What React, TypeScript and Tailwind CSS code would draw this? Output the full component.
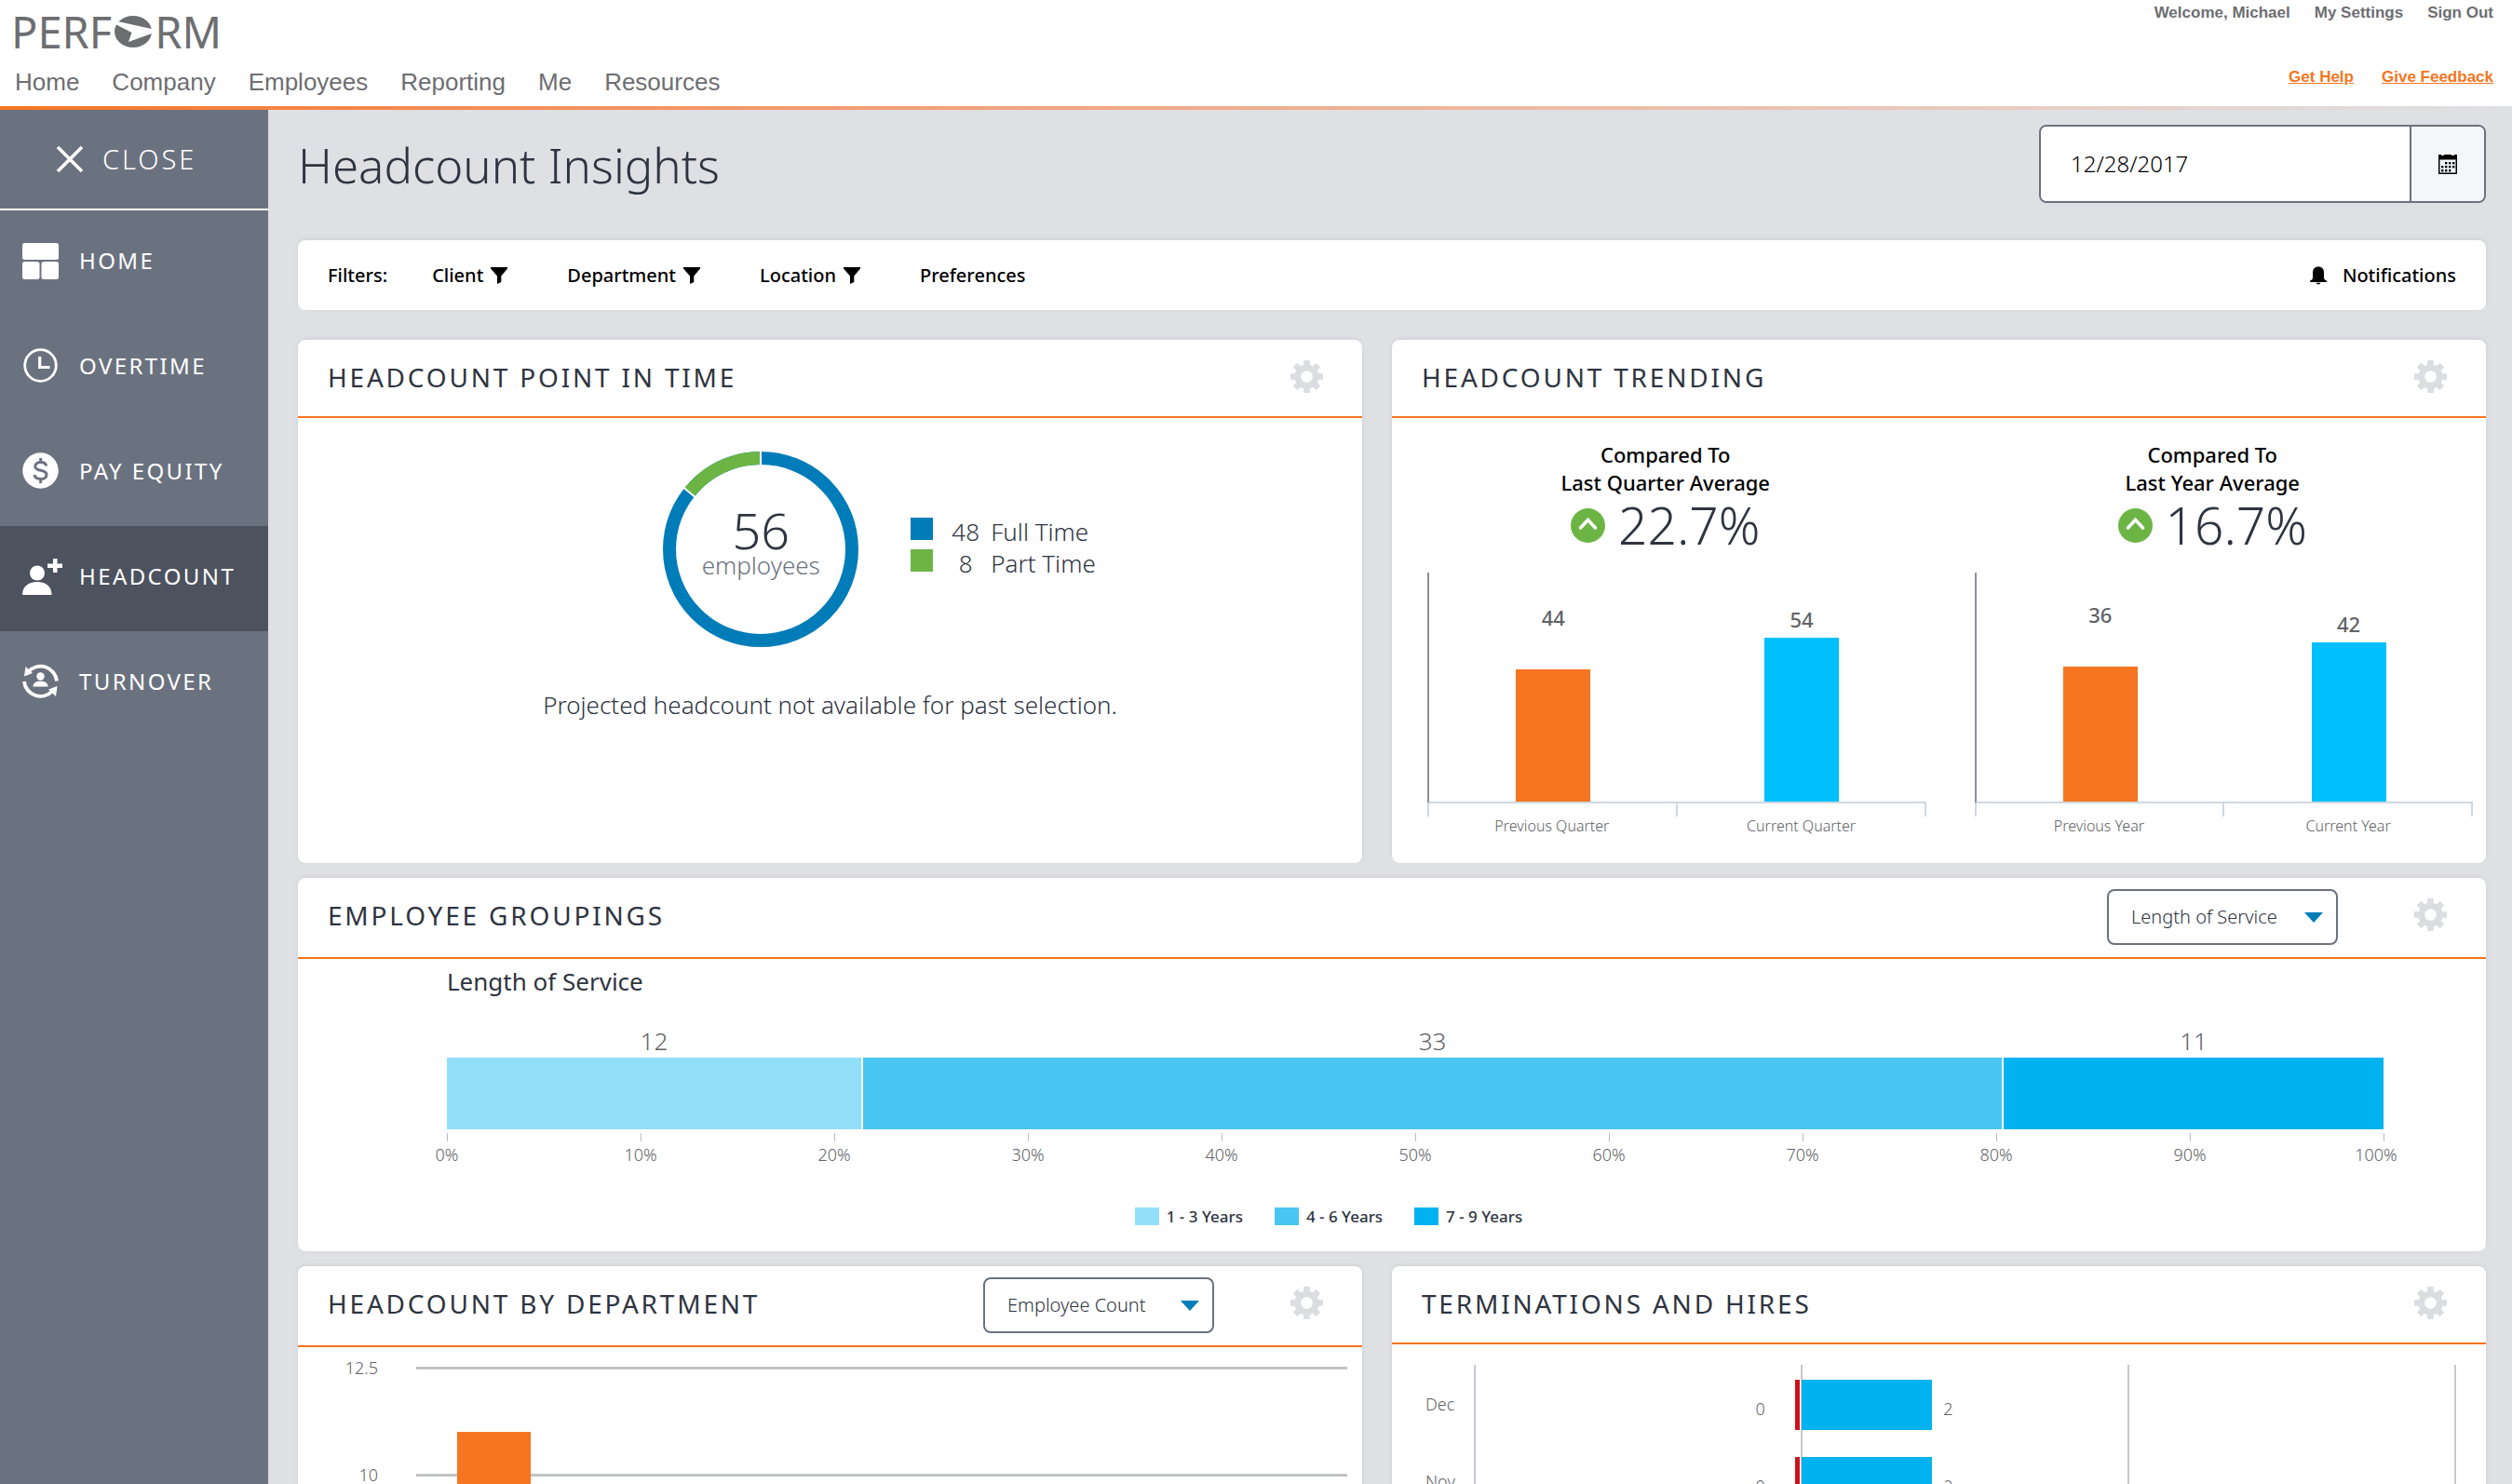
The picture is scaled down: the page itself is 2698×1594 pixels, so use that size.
import React from 'react';

const navLinks = ['Home', 'Company', 'Employees', 'Reporting', 'Me', 'Resources'];

const filters = ['Client', 'Department', 'Location'];

const quarterBars = [
  { label: 'Previous Quarter', value: 44, height: 142, color: 'bg-[#f57520]', gap: 'mb-10' },
  { label: 'Current Quarter', value: 54, height: 176, color: 'bg-[#00bfff]', gap: 'mb-1' },
];

const yearBars = [
  { label: 'Previous Year', value: 36, height: 145, color: 'bg-[#f57520]', gap: 'mb-10' },
  { label: 'Current Year', value: 42, height: 171, color: 'bg-[#00bfff]', gap: 'mb-1' },
];

const serviceGroups = [
  { label: '1 - 3 Years', value: 12, color: 'bg-[#93dff9]' },
  { label: '4 - 6 Years', value: 33, color: 'bg-[#4ac6f3]' },
  { label: '7 - 9 Years', value: 11, color: 'bg-[#00b2f0]' },
];

const percentTicks = [0, 10, 20, 30, 40, 50, 60, 70, 80, 90, 100];

const months = [
  { label: 'Dec', terminations: 0, hires: 2 },
  { label: 'Nov', terminations: 0, hires: 2 },
];

type BarDatum = (typeof quarterBars)[number];

const GearIcon = () => (
  <svg className="h-[35px] w-[35px]" viewBox="0 0 36 36" fill="#dcdde0">
    {[0, 45, 90, 135, 180, 225, 270, 315].map((angle) => (
      <rect key={angle} x="14.6" y="0" width="6.8" height="9" transform={`rotate(${angle} 18 18)`} />
    ))}
    <circle cx="18" cy="18" r="10" fill="none" stroke="#dcdde0" strokeWidth="7" />
  </svg>
);

const FunnelIcon = () => (
  <svg className="h-[18px] w-[18px]" viewBox="0 0 18 18" fill="#000">
    <path d="M0 0h18v1.5L11.3 9.5V16L7 18V9.5L0 1.5z" />
  </svg>
);

const BellIcon = () => (
  <svg className="h-5 w-5" viewBox="0 0 20 20" fill="#000">
    <path d="M10 0.5c4 0 6 2.7 6 6.3v5.4c0 1.6 1 2.6 3 3.3v1.5H1v-1.5c2-.7 3-1.7 3-3.3V6.8c0-3.6 2-6.3 6-6.3z" />
    <path d="M7.6 17.8h4.8c-.5 1.2-1.3 1.7-2.4 1.7s-1.9-.5-2.4-1.7z" />
  </svg>
);

const CalendarIcon = () => (
  <svg className="h-[22px] w-[22px]" viewBox="0 0 22 22" fill="#000">
    <path d="M1 1h3v1h3V1h8v1h3V1h3v21H1z" />
    <path d="M2.5 6.5h17v14h-17z" fill="#f3f7f9" />
    {[8, 12, 16].map((x) => (
      <rect key={`a${x}`} x={x} y="9" width="2.4" height="2.4" />
    ))}
    {[4, 8, 12, 16].map((x) => (
      <rect key={`b${x}`} x={x} y="13" width="2.4" height="2.4" />
    ))}
    {[4, 8, 12].map((x) => (
      <rect key={`c${x}`} x={x} y="17" width="2.4" height="2.4" />
    ))}
  </svg>
);

const UpIcon = () => (
  <svg className="h-[37px] w-[37px]" viewBox="0 0 37 37">
    <circle cx="18.5" cy="18.5" r="18.5" fill="#6cb545" />
    <path d="M10.5 21l8-8.500 8 8.500" fill="none" stroke="#fff" strokeWidth="3.6" strokeLinecap="round" />
  </svg>
);

const HomeIcon = () => (
  <svg className="h-10 w-10" viewBox="0 0 40 40" fill="#fff">
    <rect x="0" y="1" width="39" height="18" rx="2.5" />
    <rect x="0" y="21" width="18.5" height="19" rx="2.5" />
    <rect x="20.5" y="21" width="18.5" height="19" rx="2.5" />
  </svg>
);

const ClockIcon = () => (
  <svg className="h-10 w-10" viewBox="0 0 40 40" fill="none" stroke="#fff">
    <circle cx="19.5" cy="19.5" r="16.8" strokeWidth="2.8" />
    <path d="M18.7 10v11.5h10.8" strokeWidth="3.2" />
  </svg>
);

const DollarIcon = () => (
  <svg className="h-10 w-10" viewBox="0 0 40 40" fill="none">
    <circle cx="19.5" cy="19.5" r="19.2" fill="#fff" />
    <path
      d="M25.8 14.5c-.5-2.600-2.800-4-6-4-3.500 0-6 1.700-6 4.400 0 6.200 12.200 2.600 12.200 9 0 2.800-2.600 4.600-6.300 4.600-3.600 0-6.200-1.600-6.600-4.600M19.700 6v5M19.700 28v5"
      stroke="#6b727f"
      strokeWidth="3"
    />
  </svg>
);

const HeadcountIcon = () => (
  <svg className="h-10 w-11" viewBox="0 0 44 40" fill="#fff">
    <circle cx="16" cy="16.5" r="8" />
    <path d="M0 40c0-9 6.500-14 16-14s15.500 5 15.500 14z" />
    <path d="M33 1h4.500v5.500H43V11h-5.500v5H33v-5h-6V6.500h6z" />
  </svg>
);

const TurnoverIcon = () => (
  <svg className="h-10 w-10" viewBox="0 0 40 40" fill="none">
    <path d="M6.500 9.500A17.500 17.500 0 0 1 37 19.500M32.500 30A17.500 17.500 0 0 1 2 20" stroke="#fff" strokeWidth="3.800" />
    <path d="M3.500 4l-1.500 10.500 9-3.500zM36 36l1.500-11-9.500 3.500z" fill="#fff" />
    <circle cx="19.500" cy="14.500" r="4.200" fill="#fff" />
    <path d="M11.500 25.500c0-4 3-5.800 8-5.800s8 1.800 8 5.800z" fill="#fff" />
  </svg>
);

const menuItems = [
  { label: 'HOME', Icon: HomeIcon },
  { label: 'OVERTIME', Icon: ClockIcon },
  { label: 'PAY EQUITY', Icon: DollarIcon },
  { label: 'HEADCOUNT', Icon: HeadcountIcon, active: true },
  { label: 'TURNOVER', Icon: TurnoverIcon },
];

const Panel: React.FC<{ title: string; options?: string; className?: string; children: React.ReactNode }> = ({
  title,
  options,
  className,
  children,
}) => (
  <section className={`min-w-0 rounded-lg bg-white shadow-[0_-1px_4px_rgba(0,0,0,0.08)] ${className ?? ''}`}>
    <header
      className={`flex items-start border-b-2 border-[#f57520] pt-3 pr-[42px] pl-8 ${options ? 'h-[87px]' : 'h-[84px]'}`}
    >
      <h2 className="flex-1 text-[28px] leading-[56px] tracking-widest text-[#2e3440]">{title}</h2>
      {options && (
        <div className="relative mr-[82px]">
          <select
            aria-label={title}
            className="h-[60px] w-[248px] appearance-none rounded-lg border-2 border-[#6b727f] bg-white pl-6 text-[20px] font-light text-[#2e3440]"
          >
            <option>{options}</option>
          </select>
          <svg className="pointer-events-none absolute top-[25px] right-4 h-[11px] w-5" viewBox="0 0 20 11">
            <path d="M0 0h20L10 11z" fill="#007cb8" />
          </svg>
        </div>
      )}
      <button type="button" aria-label={`${title} settings`} className="mt-[10px]">
        <GearIcon />
      </button>
    </header>
    {children}
  </section>
);

const TrendChart: React.FC<{ period: string; change: string; bars: BarDatum[] }> = ({ period, change, bars }) => (
  <div className="flex-1">
    <p className="pt-6 text-center text-[22px] leading-[30px] font-medium text-black">
      Compared To
      <br />
      {period}
    </p>
    <div className="flex h-[62px] items-center justify-center gap-[14px]">
      <UpIcon />
      <span className="text-[55px] leading-[62px] font-light text-[#2e3440]">{change}</span>
    </div>
    <div className="mt-5 mr-[14px] ml-[38px]">
      <div className="flex h-[248px] border-b-2 border-l-2 border-b-[#cdd8e2] border-l-[#8d9096]">
        {bars.map((bar) => (
          <div key={bar.label} className="flex flex-1 flex-col items-center justify-end">
            <span className={`text-[22px] leading-8 font-medium text-[#606266] ${bar.gap}`}>{bar.value}</span>
            <div className={`w-20 ${bar.color}`} style={{ height: bar.height }} />
          </div>
        ))}
      </div>
      <div className="flex h-[14px] border-r-2 border-l-2 border-[#cdd8e2]">
        <div className="flex-1 border-r-2 border-[#cdd8e2]" />
        <div className="flex-1" />
      </div>
      <div className="flex">
        {bars.map((bar) => (
          <span key={bar.label} className="flex-1 text-center text-[16px] leading-5 font-light text-[#606266]">
            {bar.label}
          </span>
        ))}
      </div>
    </div>
  </div>
);

const Header = () => (
  <div className="bg-white">
    <div className="flex h-[114px] justify-between pr-5 pl-4">
      <div className="flex flex-col">
        <a
          href="#"
          aria-label="PERFORM"
          className="-ml-1 flex h-[62px] items-center gap-[3px] pt-1.5 text-[47px] leading-none text-[#6d6e71]"
        >
          <span>PERF</span>
          <svg className="h-[34px] w-10" viewBox="0 0 40 34">
            <ellipse cx="20" cy="17" rx="20" ry="17" fill="#6d6e71" />
            <path d="M1 5.500L40 14v5L15 28l3.500-10L1 9z" fill="#fff" />
          </svg>
          <span>RM</span>
        </a>
        <nav className="flex gap-[35px] pt-[11px] font-['Liberation_Sans',sans-serif] text-[26px] leading-[30px] text-[#6d6e71]">
          {navLinks.map((link) => (
            <a key={link} href="#">
              {link}
            </a>
          ))}
        </nav>
      </div>
      <div className="flex flex-col items-end gap-[49px] pt-1 font-['Liberation_Sans',sans-serif] text-[17px] leading-5 font-bold">
        <div className="flex gap-[26px] text-[#6d6e71]">
          <span>Welcome, Michael</span>
          <a href="#">My Settings</a>
          <a href="#">Sign Out</a>
        </div>
        <div className="flex gap-[30px] text-[#f57520] underline">
          <a href="#">Get Help</a>
          <a href="#">Give Feedback</a>
        </div>
      </div>
    </div>
    <div className="h-1 bg-gradient-to-r from-[#f57520] to-[#dfe0e4]" />
  </div>
);

const Sidebar = () => (
  <aside className="w-[288px] shrink-0 bg-[#6b727f] text-white">
    <button
      type="button"
      className="flex h-[108px] w-full items-center gap-5 border-b-2 border-white pl-[60px] text-[29px] font-light tracking-widest"
    >
      <svg className="h-[30px] w-[30px]" viewBox="0 0 30 30" fill="none" stroke="#fff" strokeWidth="3.600">
        <path d="M2 2l26 26M28 2L2 28" />
      </svg>
      CLOSE
    </button>
    <nav>
      {menuItems.map(({ label, Icon, active }) => (
        <a
          key={label}
          href="#"
          className={`flex h-[113px] items-center pb-1.5 pl-6 text-[24px] tracking-widest ${active ? 'bg-[#4c525e]' : ''}`}
        >
          <span className="w-[61px]">
            <Icon />
          </span>
          {label}
        </a>
      ))}
    </nav>
  </aside>
);

const App: React.FC = () => {
  return (
    <div className="flex h-screen flex-col overflow-hidden bg-[#dfe0e4] font-['Noto_Sans',sans-serif]">
      <Header />
      <div className="flex min-h-0 flex-1">
        <Sidebar />
        <main className="min-w-0 flex-1 pt-4 pr-7 pl-8">
          {/* Page title and date */}
          <div className="flex justify-between">
            <h1 className="text-[51px] leading-[86px] font-light text-[#2e3440]">Headcount Insights</h1>
            <div className="flex h-[84px] w-[480px] overflow-hidden rounded-lg border-2 border-[#6b727f]">
              <input
                aria-label="Date"
                defaultValue="12/28/2017"
                className="min-w-0 flex-1 bg-white px-8 text-[24px] font-light text-black"
              />
              <button
                type="button"
                aria-label="Open calendar"
                className="flex w-20 items-center justify-center border-l-2 border-[#6b727f] bg-[#f3f7f9]"
              >
                <CalendarIcon />
              </button>
            </div>
          </div>

          {/* Filters */}
          <div className="mt-[38px] flex h-[75px] items-center rounded-lg bg-white px-8 text-[20px] font-medium text-black shadow-[0_-1px_4px_rgba(0,0,0,0.08)]">
            <span className="mr-12">Filters:</span>
            {filters.map((filter) => (
              <button key={filter} type="button" className="mr-16 flex items-center gap-2">
                {filter}
                <FunnelIcon />
              </button>
            ))}
            <button type="button">Preferences</button>
            <button type="button" className="ml-auto flex items-center gap-4">
              <BellIcon />
              Notifications
            </button>
          </div>

          <div className="mt-8 grid grid-cols-[1143fr_1175fr] gap-x-8 gap-y-4">
            <Panel title="HEADCOUNT POINT IN TIME" className="h-[562px]">
              <div className="mt-9 flex items-center justify-center gap-14 pl-[106px]">
                <div className="relative h-[210px] w-[210px]">
                  <svg className="h-full w-full" viewBox="0 0 210 210" fill="none" strokeWidth="14">
                    <circle cx="105" cy="105" r="98" stroke="#007cb8" />
                    <path d="M28.4 43.9A98 98 0 0 1 105 7" stroke="#6cb545" />
                    <path d="M105 0v15M22 38.500l12 10" stroke="#fff" strokeWidth="2" />
                  </svg>
                  <div className="absolute inset-0 flex flex-col items-center pt-[60px] font-light">
                    <span className="text-[54px] leading-[48px] text-[#2e3440]">56</span>
                    <span className="text-[26px] leading-7 text-[#6b727f]">employees</span>
                  </div>
                </div>
                <ul className="text-[26px] leading-[30px] font-light text-[#2e3440]">
                  <li className="flex h-[34px] gap-5">
                    <span className="h-6 w-6 bg-[#007cb8]" />
                    <span className="w-[30px] text-center">48</span>
                    <span className="-ml-2">Full Time</span>
                  </li>
                  <li className="flex h-[34px] gap-5">
                    <span className="h-6 w-6 bg-[#6cb545]" />
                    <span className="w-[30px] text-center">8</span>
                    <span className="-ml-2">Part Time</span>
                  </li>
                </ul>
              </div>
              <p className="mt-11 text-center text-[26px] leading-9 font-light text-[#2e3440]">
                Projected headcount not available for past selection.
              </p>
            </Panel>

            <Panel title="HEADCOUNT TRENDING">
              <div className="flex">
                <TrendChart period="Last Quarter Average" change="22.7%" bars={quarterBars} />
                <TrendChart period="Last Year Average" change="16.7%" bars={yearBars} />
              </div>
            </Panel>

            <Panel title="EMPLOYEE GROUPINGS" options="Length of Service" className="col-span-2 h-[401px]">
              <div className="pr-[110px] pl-40">
                <h3 className="pt-[6px] text-[26px] leading-9 text-[#2e3440]">Length of Service</h3>
                <div className="mt-[30px] flex">
                  {serviceGroups.map((group) => (
                    <div
                      key={group.label}
                      className="border-r-2 border-white last:border-r-0"
                      style={{ flexGrow: group.value, flexBasis: 0 }}
                    >
                      <div className="text-center text-[26px] leading-8 font-light text-[#606266]">{group.value}</div>
                      <div className={`mt-[2px] h-[77px] ${group.color}`} />
                    </div>
                  ))}
                </div>
                <div className="mt-1 flex justify-between">
                  {percentTicks.map((tick) => (
                    <div key={tick} className="flex w-0 flex-col items-center">
                      <span className="h-[9px] w-px bg-[#b9bcc0]" />
                      <span
                        className={`mt-[2px] text-[18px] leading-6 font-light text-[#606266] ${tick === 100 ? 'mr-4' : ''}`}
                      >
                        {tick}%
                      </span>
                    </div>
                  ))}
                </div>
              </div>
              <div className="mt-[42px] flex justify-center gap-[34px] pr-[136px]">
                {serviceGroups.map((group) => (
                  <div key={group.label} className="flex items-center gap-2 text-[17px] font-medium text-[#2e3440]">
                    <span className={`h-[19px] w-[26px] ${group.color}`} />
                    {group.label}
                  </div>
                ))}
              </div>
            </Panel>

            <Panel title="HEADCOUNT BY DEPARTMENT" options="Employee Count" className="h-[520px]">
              <div className="mr-4 ml-[34px] pt-2 text-[18px] font-light text-[#606266]">
                <div className="flex h-[115px] gap-[41px]">
                  <span className="w-[52px] text-right leading-7">12.5</span>
                  <div className="mt-[13px] flex flex-1 items-end border-t-[3px] border-[#c0c3c6]">
                    <div className="ml-11 h-[32px] w-[79px] bg-[#f57520]" />
                  </div>
                </div>
                <div className="flex h-[115px] gap-[41px]">
                  <span className="w-[52px] text-right leading-7">10</span>
                  <div className="mt-[13px] flex-1 border-t-[3px] border-[#c0c3c6]">
                    <div className="ml-11 -mt-[17px] h-[115px] w-[79px] bg-[#f57520]" />
                  </div>
                </div>
              </div>
            </Panel>

            <Panel title="TERMINATIONS AND HIRES" className="h-[520px]">
              <div className="flex pt-[22px] pr-8 pl-9 text-[18px] font-light text-[#606266]">
                <div className="w-[52px] pt-[13px]">
                  {months.map((month) => (
                    <div key={month.label} className="h-[83px] leading-[58px]">
                      {month.label}
                    </div>
                  ))}
                </div>
                <div className="relative flex-1">
                  <div className="absolute inset-0 flex justify-between">
                    <span className="w-[2px] bg-[#c6c8cc]" />
                    <span className="w-[2px] bg-[#c6c8cc]" />
                    <span className="w-[2px] bg-[#c6c8cc]" />
                    <span className="w-[2px] bg-[#c6c8cc]" />
                  </div>
                  <div className="relative pt-4">
                    {months.map((month) => (
                      <div key={month.label} className="flex h-[83px] items-start leading-[62px]">
                        <div className="flex w-1/3 justify-end">
                          <span className="mr-8">{month.terminations}</span>
                          <div className="mr-[2px] h-[54px] w-[5px] bg-[#d0121b]" />
                        </div>
                        <div className="h-[54px] bg-[#00b2f0]" style={{ width: `${(month.hires / 15) * 100}%` }} />
                        <span className="ml-3">{month.hires}</span>
                      </div>
                    ))}
                  </div>
                </div>
              </div>
            </Panel>
          </div>
        </main>
      </div>
    </div>
  );
};

export default App;
